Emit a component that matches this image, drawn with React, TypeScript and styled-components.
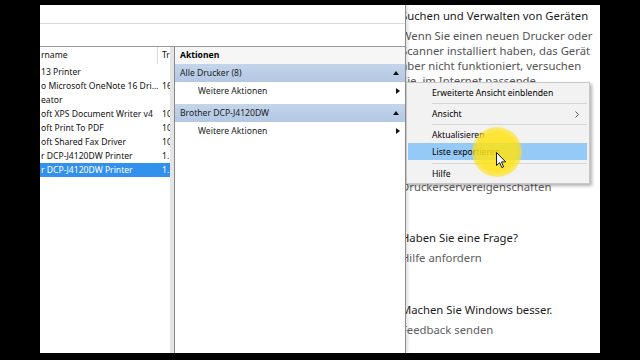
import React from 'react';
import styled, { createGlobalStyle } from 'styled-components';

const GlobalStyle = createGlobalStyle`
  html, body {
    margin: 0;
    padding: 0;
    background: #000;
  }
  body {
    font-family: "Noto Sans", "Open Sans", sans-serif;
  }
`;

const Screen = styled.div`
  width: 640px;
  height: 360px;
  background: #000;
  padding: 5px 40px 7px 40px;
  box-sizing: border-box;
  display: flex;
`;

const Desktop = styled.div`
  position: relative;
  flex: 1;
  display: flex;
  overflow: hidden;
  background: #fff;
`;

const PrintWindow = styled.div`
  width: 365px;
  flex-shrink: 0;
  display: flex;
  flex-direction: column;
  background: #fff;
  border-right: 1px solid #8c8c8c;
  box-shadow: 2px 0 3px rgba(0, 0, 0, 0.12);
  z-index: 2;
  font-size: 8.6px;
  color: #000;
`;

const TopBar = styled.div`
  height: 18px;
  border-bottom: 1px solid #dadada;
`;

const ToolBar = styled.div`
  height: 22px;
  border-bottom: 1px solid #9a9a9a;
`;

const Content = styled.div`
  flex: 1;
  display: flex;
  min-height: 0;
`;

const ListPanel = styled.div`
  width: 130px;
  display: flex;
  flex-direction: column;
`;

const ListRow = styled.div<{ $selected?: boolean; $header?: boolean }>`
  display: grid;
  grid-template-columns: 118px 1fr;
  height: ${p => (p.$header ? '17px' : '14px')};
  line-height: ${p => (p.$header ? '17px' : '14px')};
  margin-bottom: ${p => (p.$header ? '1px' : '0')};
  background: ${p => (p.$selected ? '#3391ee' : 'transparent')};
  color: ${p => (p.$selected ? '#fff' : '#111')};
`;

const NameCell = styled.div<{ $header?: boolean }>`
  padding-left: 1px;
  white-space: nowrap;
  overflow: hidden;
  border-right: ${p => (p.$header ? '1px solid #dcdcdc' : 'none')};
`;

const TypeCell = styled.div`
  padding-left: 4px;
  white-space: nowrap;
  overflow: hidden;
`;

const Splitter = styled.div`
  width: 4px;
  background: #e4e4e4;
  border-right: 1px solid #8a8a8a;
`;

const ActionsPanel = styled.div`
  flex: 1;
  display: flex;
  flex-direction: column;
`;

const ActionsHeader = styled.div`
  height: 17px;
  line-height: 17px;
  padding-left: 5px;
  font-weight: 700;
  background: #f6f6f6;
`;

const GroupHeader = styled.div<{ $gap?: boolean }>`
  height: 18px;
  display: flex;
  align-items: center;
  justify-content: space-between;
  padding: 0 6px 0 5px;
  margin-top: ${p => (p.$gap ? '4px' : '0')};
  background: linear-gradient(#c4d5eb, #b3c8e3);
  color: #1a1a1a;
`;

const ActionItem = styled.div`
  height: 18px;
  display: flex;
  align-items: center;
  justify-content: space-between;
  padding: 0 5px 0 23px;
  color: #1a1a1a;
`;

const SettingsPanel = styled.div`
  flex: 1;
  overflow: hidden;
  padding-top: 3px;
  color: #1c1c1c;
  font-size: 11.3px;
  line-height: 15px;
`;

const SettingsInner = styled.div`
  margin-left: -5px;
  white-space: nowrap;
`;

const Heading = styled.div<{ $top?: number }>`
  margin-top: ${p => p.$top ?? 0}px;
  color: #1c1c1c;
`;

const Paragraph = styled.div`
  margin-top: 5px;
  color: #555;
`;

const Line = styled.span`
  display: block;
`;

const LinkText = styled.div<{ $top?: number }>`
  margin-top: ${p => p.$top ?? 5}px;
  color: #5e5e5e;
`;

const Menu = styled.div`
  position: absolute;
  left: 366px;
  top: 77px;
  width: 180px;
  padding: 1px;
  background: #f2f2f2;
  border: 1px solid #c8c8c8;
  box-shadow: 2px 2px 3px rgba(0, 0, 0, 0.3);
  font-size: 8.6px;
  color: #000;
  z-index: 5;
`;

const MenuItem = styled.div<{ $active?: boolean; $h?: number }>`
  height: ${p => p.$h ?? 18}px;
  display: flex;
  align-items: center;
  justify-content: space-between;
  padding: 0 8px 0 24px;
  margin-right: 1px;
  background: ${p => (p.$active ? '#95c9f6' : 'transparent')};
`;

const MenuSeparator = styled.div<{ $h?: number }>`
  height: ${p => p.$h ?? 3}px;
  display: flex;
  align-items: center;
  padding-left: 24px;
  padding-right: 1px;
  &::after {
    content: '';
    flex: 1;
    height: 1px;
    background: #d6d6d6;
  }
`;

const Spotlight = styled.div`
  position: absolute;
  left: 432px;
  top: 122px;
  width: 50px;
  height: 50px;
  border-radius: 50%;
  background: radial-gradient(circle, rgba(255, 226, 20, 0.85) 55%, rgba(255, 226, 20, 0.55) 70%, rgba(255, 226, 20, 0) 100%);
  z-index: 6;
  pointer-events: none;
`;

const Cursor = styled.svg`
  position: absolute;
  left: 456px;
  top: 147px;
  z-index: 7;
`;

const UpTri = () => (
  <svg width="6" height="4" viewBox="0 0 6 4"><path d="M0 4 L3 0 L6 4 Z" fill="#111" /></svg>
);

const RightTri = () => (
  <svg width="4" height="6" viewBox="0 0 4 6"><path d="M0 0 L4 3 L0 6 Z" fill="#111" /></svg>
);

const Chevron = () => (
  <svg width="4" height="7" viewBox="0 0 4 7"><path d="M0.5 0.5 L3.5 3.5 L0.5 6.5" fill="none" stroke="#444" strokeWidth="0.9" /></svg>
);

const printers = [
  { name: '13 Printer', type: '' },
  { name: 'o Microsoft OneNote 16 Dri...', type: '16' },
  { name: 'eator', type: '' },
  { name: 'oft XPS Document Writer v4', type: '10' },
  { name: 'oft Print To PDF', type: '10' },
  { name: 'oft Shared Fax Driver', type: '10' },
  { name: 'r DCP-J4120DW Printer', type: '1.' },
  { name: 'r DCP-J4120DW Printer', type: '1.', selected: true },
];

export default function App() {
  return (
    <>
      <GlobalStyle />
      <Screen>
        <Desktop>
          <PrintWindow>
            <TopBar />
            <ToolBar />
            <Content>
              <ListPanel>
                <ListRow $header>
                  <NameCell $header>rname</NameCell>
                  <TypeCell>Tr</TypeCell>
                </ListRow>
                {printers.map((p, i) => (
                  <ListRow key={i} $selected={p.selected}>
                    <NameCell>{p.name}</NameCell>
                    <TypeCell>{p.type}</TypeCell>
                  </ListRow>
                ))}
              </ListPanel>
              <Splitter />
              <ActionsPanel>
                <ActionsHeader>Aktionen</ActionsHeader>
                <GroupHeader>
                  <span>Alle Drucker (8)</span>
                  <UpTri />
                </GroupHeader>
                <ActionItem>
                  <span>Weitere Aktionen</span>
                  <RightTri />
                </ActionItem>
                <GroupHeader $gap>
                  <span>Brother DCP-J4120DW</span>
                  <UpTri />
                </GroupHeader>
                <ActionItem>
                  <span>Weitere Aktionen</span>
                  <RightTri />
                </ActionItem>
              </ActionsPanel>
            </Content>
          </PrintWindow>

          <SettingsPanel>
            <SettingsInner>
              <Heading>Suchen und Verwalten von Geräten</Heading>
              <Paragraph>
                <Line>Wenn Sie einen neuen Drucker oder</Line>
                <Line>Scanner installiert haben, das Gerät</Line>
                <Line>aber nicht funktioniert, versuchen</Line>
                <Line>Sie, im Internet passende</Line>
              </Paragraph>
              <LinkText $top={91}>Druckerservereigenschaften</LinkText>
              <Heading $top={36}>Haben Sie eine Frage?</Heading>
              <LinkText>Hilfe anfordern</LinkText>
              <Heading $top={37}>Machen Sie Windows besser.</Heading>
              <LinkText>Feedback senden</LinkText>
            </SettingsInner>
          </SettingsPanel>

          <Menu>
            <MenuItem>Erweiterte Ansicht einblenden</MenuItem>
            <MenuSeparator />
            <MenuItem>
              <span>Ansicht</span>
              <Chevron />
            </MenuItem>
            <MenuSeparator />
            <MenuItem $h={17}>Aktualisieren</MenuItem>
            <MenuItem $h={17} $active>Liste exportieren</MenuItem>
            <MenuSeparator $h={6} />
            <MenuItem $h={16}>Hilfe</MenuItem>
          </Menu>

          <Spotlight />
          <Cursor width="11" height="17" viewBox="0 0 11 17">
            <path d="M0.5 0.5 L0.5 13.5 L3.6 10.6 L5.8 15.6 L7.6 14.8 L5.5 9.9 L9.6 9.9 Z" fill="#fff" stroke="#000" strokeWidth="0.9" strokeLinejoin="round" />
          </Cursor>
        </Desktop>
      </Screen>
    </>
  );
}
